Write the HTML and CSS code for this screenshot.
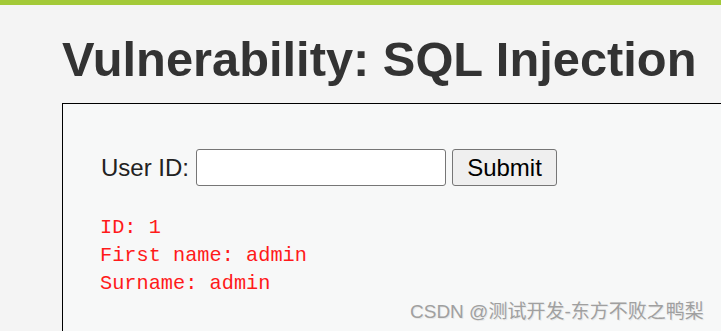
FILE: index.html
```html
<!DOCTYPE html>
<html>
<head>
	<title>Vulnerability: SQL Injection</title>
	<meta charset="utf-8">
	<link rel="stylesheet" href="styles.css">
</head>
<body>
	<div class="topbar"></div>
	<div class="main">
		<h1>Vulnerability: SQL Injection</h1>
		<div class="vulnerable-code">
			<form class="query-form" action="#" method="GET">
				<label for="uid">User ID:</label>
				<input type="text" id="uid" name="id">
				<input type="submit" name="Submit" value="Submit">
			</form>
			<pre class="result">ID: 1
First name: admin
Surname: admin</pre>
		</div>
	</div>
	<div class="watermark">CSDN @测试开发-东方不败之鸭梨</div>
</body>
</html>
```

FILE: styles.css
```css
*,*::after,*::before{
	box-sizing: border-box;
}

html, body{
	margin: 0;
	padding: 0;
	height: 100%;
	overflow: hidden;
}

body{
	background-color: #f4f4f4;
	font-family: "Liberation Sans", Arial, sans-serif;
	color: #333;
	position: relative;
}

.topbar{
	height: 5px;
	background-color: #a3c938;
}

.main{
	padding-left: 62px;
}

h1{
	margin: 26px 0 16px 0;
	font-size: 48.8px;
	line-height: 56px;
	font-weight: bold;
	color: #333;
	white-space: nowrap;
}

.vulnerable-code{
	border: 1px solid #000;
	border-right: none;
	background-color: #f7f8f8;
	padding: 45px 0 40px 37px;
}

.query-form{
	display: flex;
	align-items: center;
	gap: 7px;
}

.query-form label{
	font-size: 24px;
	color: #222;
	padding-left: 1px;
}

.query-form input[type=text]{
	width: 250px;
	height: 37px;
	margin: 0;
	border: 1px solid #767676;
	border-radius: 3px;
	background: #fff;
	font-size: 20px;
}

.query-form input[type=submit]{
	width: 105px;
	height: 37px;
	margin: 0 0 0 -1px;
	border: 1px solid #767676;
	border-radius: 3px;
	background-color: #efefef;
	font-family: "Liberation Sans", Arial, sans-serif;
	font-size: 24px;
	color: #000;
	padding: 0;
}

.result{
	margin: 28px 0 0 0;
	font-family: "Liberation Mono", "Courier New", monospace;
	font-size: 20.3px;
	line-height: 28px;
	color: #ff1a1a;
}

.watermark{
	position: absolute;
	left: 410px;
	top: 296px;
	font-family: "Liberation Sans", "Noto Sans CJK SC", sans-serif;
	font-size: 19px;
	color: #a0a0a0;
	white-space: nowrap;
	text-shadow: 1px 1px 0 #e8e8e8;
}
```
